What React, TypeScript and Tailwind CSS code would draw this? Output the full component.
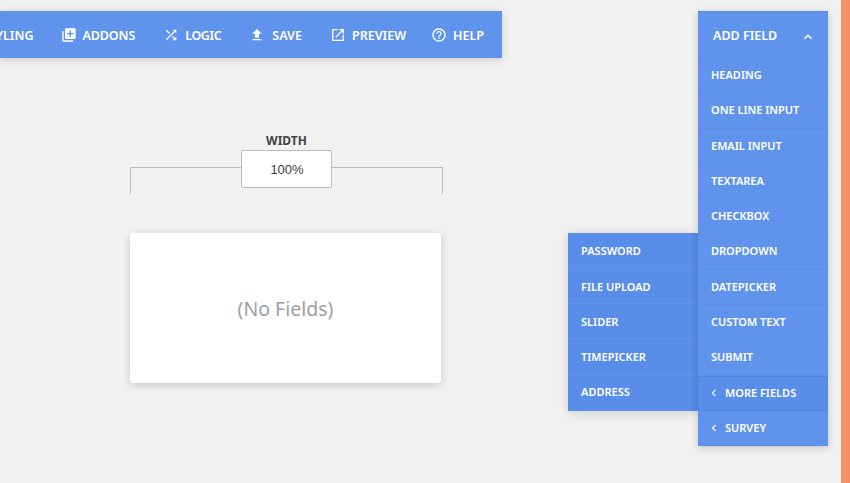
import { MdLibraryAdd, MdShuffle, MdFileUpload, MdOpenInNew, MdHelpOutline, MdKeyboardArrowUp, MdKeyboardArrowLeft } from "react-icons/md";

const font = "font-['Noto_Sans',sans-serif]";
const mainRows = [
  { t: "HEADING", c: "pt-[0.4px]" },
  { t: "ONE LINE INPUT", c: "pt-[0.4px]" },
  { t: "EMAIL INPUT", c: "pt-[0.4px]" },
  { t: "TEXTAREA", c: "pt-[0.4px]" },
  { t: "CHECKBOX", c: "pt-[0.4px]" },
  { t: "DROPDOWN", c: "pb-[0.6px]" },
  { t: "DATEPICKER", c: "pt-[0.4px]" },
  { t: "CUSTOM TEXT", c: "pt-[0.4px]" },
  { t: "SUBMIT", c: "pt-[0.4px]" },
];
const moreRows = [
  { t: "PASSWORD", c: "h-[35.4px] border-b pt-[2.5px]" },
  { t: "FILE UPLOAD", c: "h-[35.4px] border-b pt-[3px]" },
  { t: "SLIDER", c: "h-[35.4px] border-b pt-[2px]" },
  { t: "TIMEPICKER", c: "h-[35.4px] border-b pt-[1px]" },
  { t: "ADDRESS", c: "h-[36px]" },
];

function ToolItem({ icon, label, className, labelClass = "" }: { icon: React.ReactNode; label: string; className: string; labelClass?: string }) {
  return (
    <div className={`flex items-center ${className}`}>
      {icon}
      <span className={`pt-[4px] ${labelClass}`}>{label}</span>
    </div>
  );
}

export default function App() {
  return (
    <div className={`flex h-[483px] w-[850px] overflow-hidden bg-[#f1f1f1] ${font}`}>
      <div className="flex w-[568px] shrink-0 flex-col">
        <div className="mt-[11px] flex h-[47px] w-[502px] items-center justify-end bg-[#6094ec] pr-[18px] text-[12.5px] font-semibold text-white shadow-[0_2px_8px_rgba(0,0,0,0.15)]">
          <span className="mr-[28px] pt-[4px]">YLING</span>
          <ToolItem className="mr-[28px] gap-[5px]" icon={<MdLibraryAdd size={16} />} label="ADDONS" labelClass="tracking-[-0.1px]" />
          <ToolItem className="mr-[28px] gap-[6px]" icon={<MdShuffle size={16} />} label="LOGIC" labelClass="tracking-[-0.4px]" />
          <ToolItem className="mr-[28px] gap-[7px]" icon={<MdFileUpload size={16} />} label="SAVE" />
          <ToolItem className="mr-[25px] gap-[6px]" icon={<MdOpenInNew size={16} />} label="PREVIEW" />
          <ToolItem className="gap-[6px]" icon={<MdHelpOutline size={16} />} label="HELP" />
        </div>

        <div className="ml-[130px] flex w-[313px] flex-col items-center">
          <div className="mt-[75px] text-[12px] leading-[16px] font-bold text-[#444444]">WIDTH</div>
          <div className="relative mt-[1px] h-[44px] w-full">
            <div className="absolute top-[17px] right-0 left-0 h-[27px] border-x border-t border-[#bbbbbb]" />
            <div className="absolute top-0 left-[111px] flex h-[38px] w-[91px] items-center justify-center rounded-[2px] border border-[#bbbbbb] bg-white pt-[1px] pl-[1px] font-['Liberation_Sans',sans-serif] text-[13px] text-[#3c3c3c]">
              100%
            </div>
          </div>
        </div>

        <div className="mt-[39px] ml-[130px] flex h-[150px] w-[311px] items-center justify-center rounded-[3px] bg-white pt-[2px] text-[19.5px] text-[#a0a0a0] shadow-[0_2px_8px_rgba(0,0,0,0.18)]">
          (No Fields)
        </div>
      </div>

      <div className="w-[130px] shrink-0 pt-[233px]">
        <div className="bg-[#598dea] text-[11px] font-semibold text-white shadow-[0_2px_10px_rgba(0,0,0,0.15)]">
          {moreRows.map((r) => (
            <div key={r.t} className={`flex items-center border-[#6192ec] pl-[13px] ${r.c}`}>
              {r.t}
            </div>
          ))}
        </div>
      </div>

      <div className="relative z-10 mt-[11px] h-[435px] w-[130px] shrink-0 bg-[#6094ec] text-[11px] font-semibold text-white shadow-[0_2px_8px_rgba(0,0,0,0.18),inset_0_1px_0_#5a8eea]">
        <div className="flex h-[47px] items-center justify-between border-b border-[#5a8eea] pt-[5px] pr-[12px] pl-[15px] text-[12.5px]">
          <span>ADD FIELD</span>
          <MdKeyboardArrowUp size={16} />
        </div>
        {mainRows.map((r) => (
          <div key={r.t} className={`flex h-[35.3px] items-center border-b border-[#5a8eea] pl-[13px] ${r.c}`}>
            {r.t}
          </div>
        ))}
        <div className="flex h-[35.3px] items-center border-y border-[#5084e0] bg-[#598dea] pl-[9px]">
          <MdKeyboardArrowLeft size={14} className="mr-[4px]" />
          MORE FIELDS
        </div>
        <div className="flex h-[35.3px] items-center border-b border-[#5a8eea] pl-[9px]">
          <MdKeyboardArrowLeft size={14} className="mr-[4px]" />
          SURVEY
        </div>
      </div>

      <div className="ml-[13px] h-full w-[9px] shrink-0 bg-[#f29066]" />
    </div>
  );
}
